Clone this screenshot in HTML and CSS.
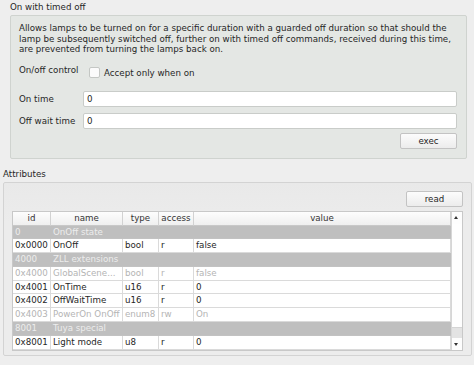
FILE: index.html
```html
<!DOCTYPE html>
<html lang="en">
<head>
    <meta charset="UTF-8">
    <title>On with timed off</title>
    <link rel="stylesheet" href="styles.css">
</head>
<body>
    <div class="box-title">On with timed off</div>
    <div class="group">
        <p class="desc">Allows lamps to be turned on for a specific duration with a guarded off duration so that should the lamp be subsequently switched off, further on with timed off commands, received during this time, are prevented from turning the lamps back on.</p>

        <div class="row row-check">
            <label class="label">On/off control</label>
            <span class="checkbox"></span>
            <span class="check-text">Accept only when on</span>
        </div>
        <div class="row row-input">
            <label class="label" for="on-time">On time</label>
            <input class="field" type="text" id="on-time" value="0">
        </div>
        <div class="row row-input second">
            <label class="label" for="off-wait">Off wait time</label>
            <input class="field" type="text" id="off-wait" value="0">
        </div>
        <div class="actions">
            <button class="btn">exec</button>
        </div>
    </div>

    <div class="box-title attr-title">Attributes</div>
    <div class="attr-box">
        <div class="actions top">
            <button class="btn">read</button>
        </div>
        <div class="table-wrap">
            <div class="grid">
                <div class="th">id</div>
                <div class="th">name</div>
                <div class="th">type</div>
                <div class="th">access</div>
                <div class="th">value</div>

                <div class="td section">0</div>
                <div class="td section span">OnOff state</div>

                <div class="td">0x0000</div>
                <div class="td">OnOff</div>
                <div class="td">bool</div>
                <div class="td">r</div>
                <div class="td">false</div>

                <div class="td section">4000</div>
                <div class="td section span">ZLL extensions</div>

                <div class="td off">0x4000</div>
                <div class="td off">GlobalScene...</div>
                <div class="td off">bool</div>
                <div class="td off">r</div>
                <div class="td off">false</div>

                <div class="td">0x4001</div>
                <div class="td">OnTime</div>
                <div class="td">u16</div>
                <div class="td">r</div>
                <div class="td">0</div>

                <div class="td">0x4002</div>
                <div class="td">OffWaitTime</div>
                <div class="td">u16</div>
                <div class="td">r</div>
                <div class="td">0</div>

                <div class="td off">0x4003</div>
                <div class="td off">PowerOn OnOff</div>
                <div class="td off">enum8</div>
                <div class="td off">rw</div>
                <div class="td off">On</div>

                <div class="td section">8001</div>
                <div class="td section span">Tuya special</div>

                <div class="td">0x8001</div>
                <div class="td">Light mode</div>
                <div class="td">u8</div>
                <div class="td">r</div>
                <div class="td">0</div>
            </div>
            <div class="scrollbar">
                <div class="arrow up"></div>
                <div class="track"><div class="thumb"></div></div>
                <div class="arrow down"></div>
            </div>
        </div>
    </div>
</body>
</html>
```

FILE: styles.css
```css
body {
    margin: 0;
    background-color: #eeeeee;
    font-family: "DejaVu Sans", sans-serif;
    font-size: 8.7px;
    color: #262626;
}
.box-title {
    height: 15px;
    line-height: 14px;
    padding-left: 10px;
    box-sizing: border-box;
}
.group {
    margin: 0 7px 0 10px;
    padding: 7px 9px 9px 8px;
    border: 1px solid #cfd3cf;
    border-radius: 2px;
    background-color: #e4e7e4;
}
.desc {
    margin: 0;
    line-height: 10.5px;
}
.row {
    display: flex;
}
.label {
    width: 64px;
    flex-shrink: 0;
}
.row-check {
    margin-top: 10px;
    height: 14px;
    line-height: 11px;
}
.checkbox {
    width: 11px;
    height: 11px;
    box-sizing: border-box;
    margin: 2px 0 0 6px;
    border: 1px solid #c4c7c4;
    border-radius: 2px;
    background-color: #fbfbfb;
}
.check-text {
    margin: 3px 0 0 4px;
}
.row-input {
    margin-top: 12.5px;
    align-items: center;
}
.row-input.second {
    margin-top: 6px;
}
.field {
    flex: 1;
    height: 16px;
    box-sizing: border-box;
    margin: 0;
    padding: 0 3px;
    border: 1px solid #c9ccc9;
    border-radius: 2px;
    background-color: white;
    font-family: inherit;
    font-size: inherit;
    color: inherit;
}
.second .field {
    height: 15.5px;
}
.actions {
    display: flex;
    justify-content: flex-end;
    margin-top: 4px;
}
.btn {
    width: 57px;
    height: 16px;
    padding: 0;
    border: 1px solid #c3c3c3;
    border-radius: 2px;
    background: linear-gradient(#fcfcfc, #ececec);
    font-family: inherit;
    font-size: inherit;
    color: inherit;
}
.attr-title {
    height: 23px;
    padding: 8px 0 0 3px;
    line-height: 14px;
}
.attr-box {
    margin: 0 2px 0 3px;
    padding: 8px 8px 4px 8px;
    border: 1px solid #d3d3d3;
    border-radius: 2px;
    background: linear-gradient(#e9e9e9, #ececec 40px);
}
.actions.top {
    margin-top: 0;
}
.table-wrap {
    display: flex;
    margin-top: 4px;
    height: 140px;
    border: 1px solid #c8c8c8;
    background-color: white;
    box-sizing: border-box;
}
.grid {
    flex: 1;
    display: grid;
    grid-template-columns: 38px 72px 36px 35px 1fr;
    grid-template-rows: 14px;
    grid-auto-rows: 13.8px;
}
.th, .td {
    border-right: 1px solid #dadada;
    border-bottom: 1px solid #dadada;
    padding-left: 2px;
    white-space: nowrap;
    overflow: hidden;
    line-height: 13px;
}
.th {
    text-align: center;
    padding-left: 0;
    background: linear-gradient(#fdfdfd, #efefef);
    border-bottom-color: #c8c8c8;
    border-right-color: #d2d2d2;
    color: #333;
}
.td.off {
    color: #b4b4b4;
}
.td.section {
    background-color: #bfbfbf;
    color: #ededed;
    border-right: none;
    border-bottom-color: #c2c2c2;
}
.td.span {
    grid-column: span 4;
}
.scrollbar {
    width: 10px;
    display: flex;
    flex-direction: column;
    border-left: 1px solid #d6d6d6;
    background-color: #fdfdfd;
}
.arrow {
    height: 12px;
    position: relative;
}
.arrow::after {
    content: "";
    position: absolute;
    left: 2px;
    border-left: 2.5px solid transparent;
    border-right: 2.5px solid transparent;
}
.arrow.up::after {
    top: 4px;
    border-bottom: 3px solid #333;
}
.arrow.down::after {
    top: 5px;
    border-top: 3px solid #333;
}
.track {
    flex: 1;
    background-color: #e3e3e3;
}
.thumb {
    height: 103px;
    background-color: #fefefe;
    border-bottom: 1px solid #d4d4d4;
}
```
